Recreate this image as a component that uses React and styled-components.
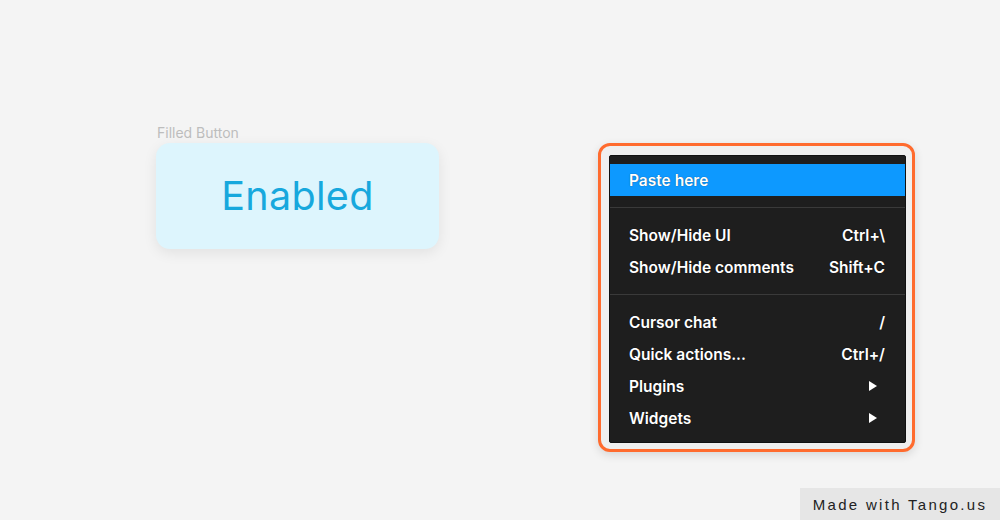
import React from 'react'
import styled, { createGlobalStyle } from 'styled-components';

const GlobalStyle = createGlobalStyle`
    html, body {
        margin: 0;
        padding: 0;
        background: #f4f4f4;
    }
    body {
        font-family: Inter, "Noto Sans", sans-serif;
    }
`

const topItems = [
    { label: 'Show/Hide UI', hint: 'Ctrl+\\' },
    { label: 'Show/Hide comments', hint: 'Shift+C' },
]

const bottomItems = [
    { label: 'Cursor chat', hint: '/' },
    { label: 'Quick actions...', hint: 'Ctrl+/' },
    { label: 'Plugins', sub: true },
    { label: 'Widgets', sub: true },
]

function Arrow() {
    return (
        <svg width="10" height="12" viewBox="0 0 10 12">
            <path d="M1 1 L9 6 L1 11 Z" fill="#fff" />
        </svg>
    )
}

function MenuRow({ item, active }) {
    return (
        <Row active={active}>
            <span>{item.label}</span>
            {item.sub ? <SubArrow><Arrow /></SubArrow> : <Hint>{item.hint}</Hint>}
        </Row>
    )
}

function App() {
    return (
        <Page>
            <GlobalStyle />
            <Canvas>
                <ButtonColumn>
                    <FrameLabel>Filled Button</FrameLabel>
                    <FilledButton>Enabled</FilledButton>
                </ButtonColumn>
                <Highlight>
                    <Menu>
                        <MenuRow item={{ label: 'Paste here' }} active />
                        <Separator />
                        {topItems.map(item => <MenuRow key={item.label} item={item} />)}
                        <Separator />
                        {bottomItems.map(item => <MenuRow key={item.label} item={item} />)}
                    </Menu>
                </Highlight>
            </Canvas>
            <Badge>Made with Tango.us</Badge>
        </Page>
    )
}

export default App


const Page = styled.div`
    position: relative;
    width: 1000px;
    height: 520px;
    overflow: hidden;
    background: #f4f4f4;
`
const Canvas = styled.div`
    display: flex;
    align-items: flex-start;
    gap: 159px;
    padding: 125px 0 0 156px;
`
const ButtonColumn = styled.div`
    display: flex;
    flex-direction: column;
    width: 283px;
`
const FrameLabel = styled.div`
    font-size: 14px;
    color: #bdbdbd;
    height: 18px;
    padding-left: 1px;
    line-height: 16px;
`
const FilledButton = styled.div`
    height: 106px;
    border-radius: 14px;
    background: #ddf5fd;
    box-shadow: 0 4px 14px rgba(0, 0, 0, 0.08);
    display: flex;
    align-items: center;
    justify-content: center;
    font-size: 39.5px;
    color: #17a8dd;
    letter-spacing: 0.3px;
`
const Highlight = styled.div`
    margin-top: 18px;
    width: 317px;
    height: 309px;
    box-sizing: border-box;
    border: 3px solid #ff6b2e;
    border-radius: 12px;
    background: #efefef;
    box-shadow: 0 3px 10px rgba(0, 0, 0, 0.12);
    padding: 9px 6px 6px 8px;
`
const Menu = styled.div`
    width: 297px;
    height: 288px;
    box-sizing: border-box;
    background: #1e1e1e;
    border: 1px solid #111;
    border-radius: 2px;
    padding: 8px 0;
    display: flex;
    flex-direction: column;
`
const Row = styled.div`
    height: 32px;
    flex-shrink: 0;
    display: flex;
    align-items: center;
    justify-content: space-between;
    padding: 0 20px 0 19px;
    background: ${p => p.active ? '#0d99ff' : 'transparent'};
    color: #fff;
    font-size: 15.5px;
    font-weight: 600;
    text-shadow: 0 0 1px rgba(0, 0, 0, 0.6);
`
const Hint = styled.span`
    color: #fff;
`
const SubArrow = styled.span`
    display: flex;
    padding-right: 7px;
`
const Separator = styled.div`
    height: 23px;
    flex-shrink: 0;
    display: flex;
    align-items: center;

    &::after {
        content: '';
        width: 100%;
        height: 1px;
        background: #3a3a3a;
    }
`
const Badge = styled.div`
    position: absolute;
    right: 0;
    bottom: 0;
    width: 200px;
    height: 32px;
    background: #e6e6e6;
    color: #222;
    font-family: "Liberation Sans", Arial, sans-serif;
    font-size: 15px;
    letter-spacing: 2.3px;
    display: flex;
    align-items: center;
    justify-content: center;
`
